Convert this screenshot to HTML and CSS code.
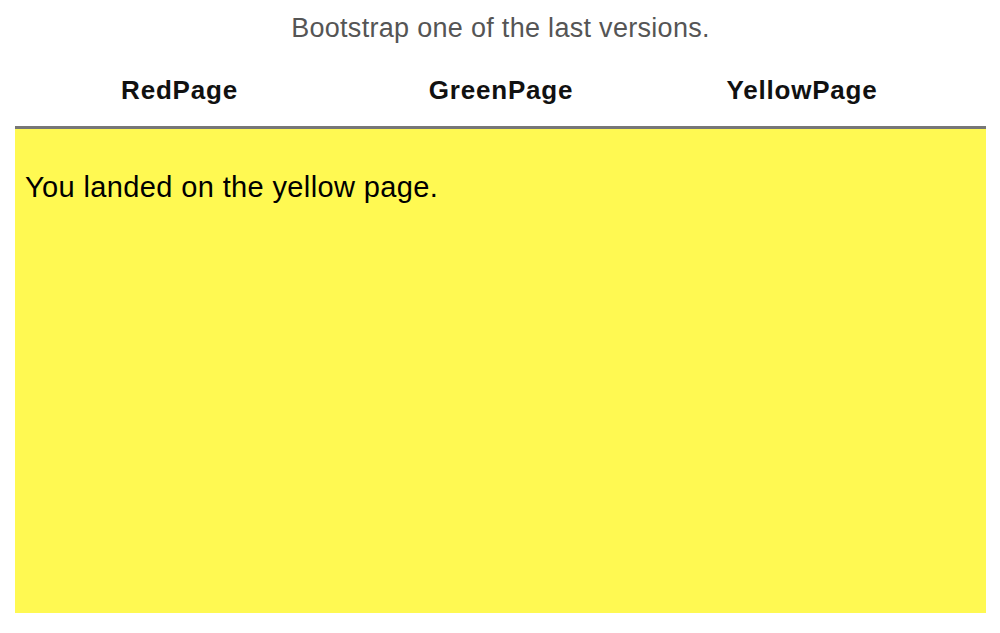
FILE: index.html
```html
<!DOCTYPE html>
<html lang="en">
<head>
    <meta charset="UTF-8">
    <meta name="viewport" content="width=device-width, initial-scale=1.0">
    <title>Pages</title>
    <link rel="stylesheet" href="styles.css">
</head>
<body>
    <p class="title">Bootstrap one of the last versions.</p>
    <nav class="tabs">
        <a href="#red">RedPage</a>
        <a href="#green">GreenPage</a>
        <a href="#yellow">YellowPage</a>
    </nav>

    <!-- active page -->
    <section class="page yellow">
        <p>You landed on the yellow page.</p>
    </section>
</body>
</html>
```

FILE: styles.css
```css
body {
    font-family: "Liberation Sans", Arial, Helvetica, sans-serif;
    margin: 0;
    padding: 0 14px 0 15px;
    background: #ffffff;
    color: #000000;
}

.title {
    margin: 0;
    padding-top: 13px;
    font-size: 27px;
    line-height: 30px;
    letter-spacing: 0.3px;
    color: #555555;
    text-align: center;
}

.tabs {
    display: grid;
    grid-template-columns: 329px 314px 288px;
    margin-top: 32px;
    padding-bottom: 21px;
}

.tabs a {
    font-size: 26px;
    line-height: 30px;
    font-weight: bold;
    letter-spacing: 0.8px;
    color: #111111;
    text-decoration: none;
    text-align: center;
}

.page {
    height: 484px;
    border-top: 3px solid #777777;
    padding: 0 10px;
}

.page p {
    margin: 0;
    padding-top: 41px;
    font-size: 29px;
    line-height: 34px;
    letter-spacing: 0.37px;
}

.yellow {
    background-color: #fff952;
}
```
